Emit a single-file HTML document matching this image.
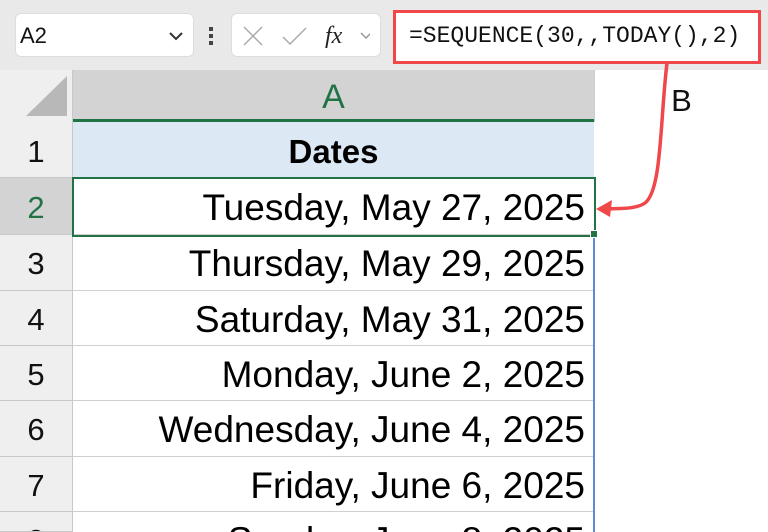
<!DOCTYPE html>
<html><head><style>
*{margin:0;padding:0;box-sizing:border-box}
html,body{width:768px;height:532px;overflow:hidden}
body{background:#fff;position:relative;font-family:"Liberation Sans",sans-serif}
.abs{position:absolute}
.tb{left:0;top:0;width:768px;height:70px;background:#e9e9e9}
.box{background:#fff;border-radius:6px;border:1px solid #ddd}
.rh{left:0;width:73px;background:#efefef;border-bottom:1px solid #c8c8c8;border-right:1px solid #c8c8c8;text-align:center;font-size:31px;color:#111}
.cell{left:73px;width:521px;border-bottom:1px solid #d0d0d0;text-align:right;padding-right:9px;font-size:37px;color:#000}
</style></head><body>
<div class="abs tb"></div>
<div class="abs box" style="left:15px;top:13px;width:179px;height:44px"></div>
<div class="abs" style="left:20px;top:23px;font-size:22px;color:#111">A2</div>
<svg class="abs" style="left:168px;top:30px" width="16" height="12"><path d="M2 3 L8 9 L14 3" stroke="#333" stroke-width="2" fill="none"/></svg>
<div class="abs" style="left:209px;top:27px;width:4px;height:4px;background:#444"></div>
<div class="abs" style="left:209px;top:34px;width:4px;height:4px;background:#444"></div>
<div class="abs" style="left:209px;top:41px;width:4px;height:4px;background:#444"></div>
<div class="abs box" style="left:231px;top:13px;width:150px;height:44px"></div>
<svg class="abs" style="left:240px;top:24px" width="130" height="24"><path d="M4 3 L22 21 M22 3 L4 21" stroke="#aaa" stroke-width="1.5"/><path d="M43 13 L50 20 L66 4" stroke="#aaa" stroke-width="1.5" fill="none"/><text x="85" y="19" font-family="Liberation Serif" font-style="italic" font-size="24" fill="#222">fx</text><path d="M121 9 L126 14 L131 9" stroke="#999" stroke-width="1.5" fill="none"/></svg>
<div class="abs" style="left:393px;top:10px;width:368px;height:54px;background:#fff;border:3px solid #f0474a"></div>
<div class="abs" style="left:409px;top:23px;font-family:'Liberation Mono',monospace;font-size:23px;color:#111">=SEQUENCE(30,,TODAY(),2)</div>
<!-- header row -->
<div class="abs" style="left:0;top:70px;width:73px;height:52px;background:#efefef;border-right:1px solid #c8c8c8"></div>
<svg class="abs" style="left:25px;top:76px" width="44" height="42"><path d="M42 0 L42 40 L1 40 Z" fill="#b8b8b8"/></svg>
<div class="abs" style="left:73px;top:70px;width:521px;height:52px;background:#d3d3d3;border-bottom:3px solid #217346;text-align:center;font-size:34px;color:#217346;line-height:54px">A</div>
<div class="abs" style="left:594px;top:70px;width:174px;height:52px;background:#fff;border-left:1px solid #ccc;text-align:center;font-size:31px;line-height:62px;color:#111">B</div>
<!-- rows -->
<div class="abs rh" style="top:122px;height:56px;line-height:60px">1</div>
<div class="abs cell" style="top:122px;height:56px;background:#dce9f5;text-align:center;padding:0;font-weight:bold;font-size:33px;line-height:60px">Dates</div>
<div class="abs rh" style="top:178px;height:57px;line-height:60px;background:#d3d3d3;color:#217346">2</div>
<div class="abs cell" style="top:178px;height:57px;line-height:60px">Tuesday, May 27, 2025</div>
<div class="abs rh" style="top:235px;height:56px;line-height:58px">3</div>
<div class="abs cell" style="top:235px;height:56px;line-height:58px">Thursday, May 29, 2025</div>
<div class="abs rh" style="top:291px;height:55px;line-height:58px">4</div>
<div class="abs cell" style="top:291px;height:55px;line-height:58px">Saturday, May 31, 2025</div>
<div class="abs rh" style="top:346px;height:55px;line-height:58px">5</div>
<div class="abs cell" style="top:346px;height:55px;line-height:58px">Monday, June 2, 2025</div>
<div class="abs rh" style="top:401px;height:56px;line-height:58px">6</div>
<div class="abs cell" style="top:401px;height:56px;line-height:58px">Wednesday, June 4, 2025</div>
<div class="abs rh" style="top:457px;height:55px;line-height:58px">7</div>
<div class="abs cell" style="top:457px;height:55px;line-height:58px">Friday, June 6, 2025</div>
<div class="abs rh" style="top:512px;height:20px;line-height:58px;overflow:hidden">8</div>
<div class="abs cell" style="top:512px;height:20px;line-height:58px;overflow:hidden;border:none">Sunday, June 8, 2025</div>
<!-- selection -->
<div class="abs" style="left:72px;top:177px;width:524px;height:60px;border:2.5px solid #217346"></div>
<div class="abs" style="left:593px;top:237px;width:2px;height:295px;background:#5b8bd6"></div>
<div class="abs" style="left:590px;top:230px;width:8px;height:8px;background:#217346;border:1px solid #fff"></div>
<svg class="abs" style="left:590px;top:60px" width="100" height="160"><path d="M77 3 C70 60 72 130 55 143 C45 150 25 148 18 149" stroke="#f0474a" stroke-width="3.5" fill="none"/><path d="M6 149 L22 140 L20 157 Z" fill="#f0474a"/></svg>
</body></html>
